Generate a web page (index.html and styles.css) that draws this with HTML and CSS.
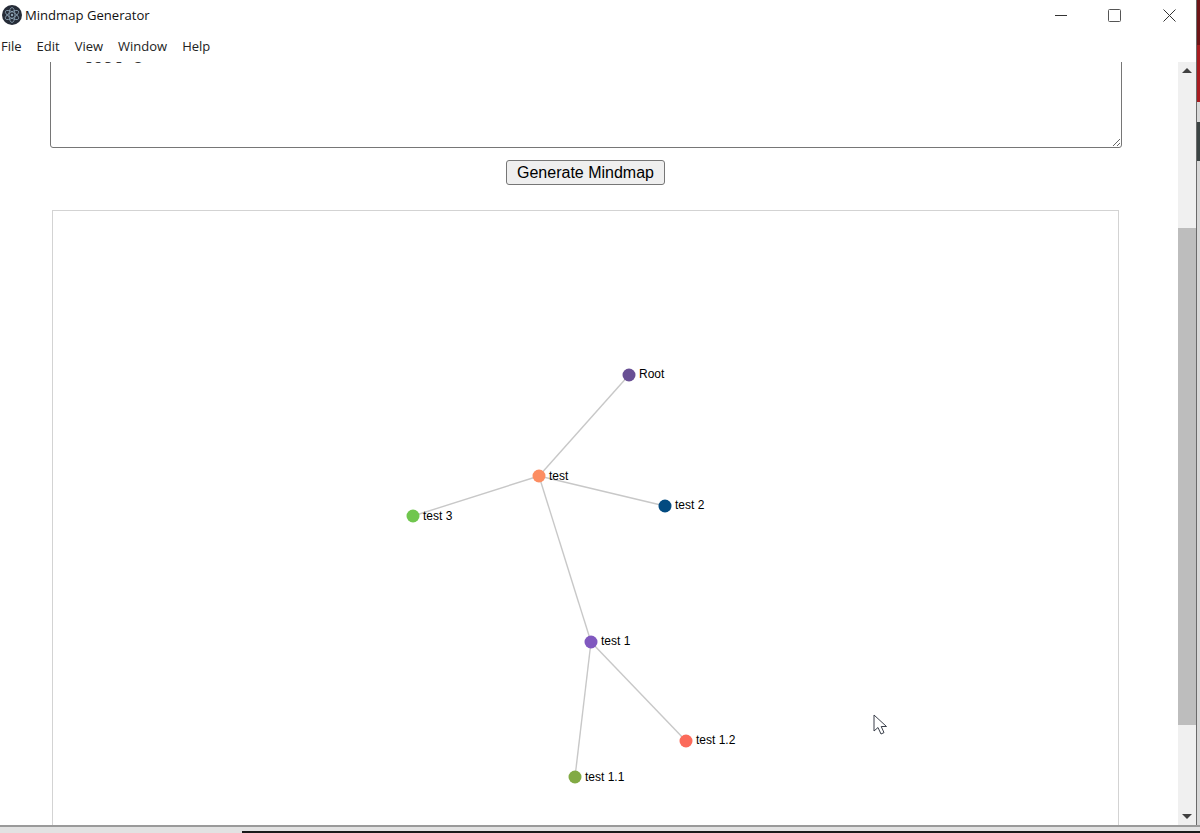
FILE: index.html
```html
<!DOCTYPE html>
<html lang="en">

<head>
  <meta charset="UTF-8">
  <title>Mindmap Generator</title>
  <link rel="stylesheet" href="styles.css">
</head>

<body>
  <div class="desktop">
    <div class="window">
      <div class="titlebar">
        <svg class="app-icon" viewBox="0 0 20 20" width="20" height="20">
          <circle cx="10" cy="10" r="10" fill="#262c38" />
          <g fill="none" stroke="#8fa6b8" stroke-width="0.8">
            <ellipse cx="10" cy="10" rx="7.5" ry="3" transform="rotate(30 10 10)" />
            <ellipse cx="10" cy="10" rx="7.5" ry="3" transform="rotate(90 10 10)" />
            <ellipse cx="10" cy="10" rx="7.5" ry="3" transform="rotate(150 10 10)" />
          </g>
          <circle cx="10" cy="10" r="1.2" fill="#8fa6b8" />
        </svg>
        <span class="app-title">Mindmap Generator</span>
        <div class="win-controls">
          <svg class="win-btn min" viewBox="0 0 12 12" width="12" height="12">
            <path d="M0 6.5H12" stroke="#333" fill="none" />
          </svg>
          <svg class="win-btn max" viewBox="0 0 13 13" width="13" height="13">
            <rect x="0.5" y="0.5" width="12" height="12" rx="1" stroke="#555" fill="none" />
          </svg>
          <svg class="win-btn" viewBox="0 0 13 13" width="13" height="13">
            <path d="M0.5 0.5L12.5 12.5M12.5 0.5L0.5 12.5" stroke="#333" fill="none" />
          </svg>
        </div>
      </div>

      <div class="menubar">
        <span>File</span>
        <span>Edit</span>
        <span>View</span>
        <span>Window</span>
        <span>Help</span>
      </div>

      <div class="content">
        <div class="page">
          <textarea class="source" spellcheck="false">   test 3</textarea>
          <button class="generate">Generate Mindmap</button>
          <div class="map">
            <svg class="map-svg" width="1065" height="640" viewBox="53 211 1065 640">
              <g class="links">
                <line x1="629" y1="375" x2="539" y2="476" />
                <line x1="539" y1="476" x2="665" y2="506" />
                <line x1="539" y1="476" x2="413" y2="516" />
                <line x1="539" y1="476" x2="591" y2="642" />
                <line x1="591" y1="642" x2="575" y2="777" />
                <line x1="591" y1="642" x2="686" y2="741" />
              </g>
              <g class="nodes">
                <circle cx="629" cy="375" r="6.5" fill="#684f94" />
                <text x="639" y="378">Root</text>
                <circle cx="539" cy="476" r="6.5" fill="#fc8d62" />
                <text x="549" y="480">test</text>
                <circle cx="665" cy="506" r="6.5" fill="#024a80" />
                <text x="675" y="509">test 2</text>
                <circle cx="413" cy="516" r="6.5" fill="#70c64e" />
                <text x="423" y="520">test 3</text>
                <circle cx="591" cy="642" r="6.5" fill="#8058bf" />
                <text x="601" y="645">test 1</text>
                <circle cx="686" cy="741" r="6.5" fill="#fb6a5a" />
                <text x="696" y="744">test 1.2</text>
                <circle cx="575" cy="777" r="6.5" fill="#82aa44" />
                <text x="585" y="781">test 1.1</text>
              </g>
            </svg>
          </div>
        </div>

        <div class="scrollbar">
          <div class="arrow up"></div>
          <div class="track">
            <div class="thumb"></div>
          </div>
          <div class="arrow down"></div>
        </div>

        <!-- mouse pointer caught in the screenshot -->
        <svg class="cursor" viewBox="0 0 16 22" width="16" height="22">
          <path d="M1 1V17L5 13.5L8 20L11 18.6L8.2 12.5H13.5Z" fill="#fff" stroke="#3a3f4a" />
        </svg>
      </div>
    </div>

    <div class="wallpaper"></div>
  </div>

  <div class="taskbar-edge">
    <div class="taskbar-dark"></div>
  </div>
</body>

</html>
```

FILE: styles.css
```css
* {
  box-sizing: border-box;
}

html,
body {
  margin: 0;
  height: 100%;
  overflow: hidden;
}

body {
  display: flex;
  flex-direction: column;
  font-family: "Open Sans", "Noto Sans", sans-serif;
  background: #fff;
}

.desktop {
  display: flex;
  height: 825px;
}

.window {
  flex: 1;
  display: flex;
  flex-direction: column;
  min-width: 0;
  background: #fff;
}

.wallpaper {
  width: 4px;
  background: linear-gradient(#6e1416 0, #6e1416 45px, #a81c20 45px, #a81c20 102px, #d8d8d8 102px, #d8d8d8 122px, #3c4444 122px, #3c4444 161px, #d8d8d8 161px);
  border-left: 1px solid #6a6a6a;
}

.titlebar {
  display: flex;
  align-items: center;
  height: 31px;
  padding: 0 0 1px 2px;
  flex-shrink: 0;
}

.app-title {
  margin-left: 3px;
  font-size: 13.1px;
  color: #111;
}

.win-controls {
  margin-left: auto;
  display: flex;
  align-items: center;
  padding-right: 20px;
}

.win-btn {
  display: block;
}

.win-btn.min {
  margin-right: 41px;
}

.win-btn.max {
  margin-right: 42px;
}

.menubar {
  display: flex;
  align-items: center;
  gap: 15px;
  height: 31px;
  padding: 0 0 2px 1px;
  font-size: 13px;
  color: #222;
  flex-shrink: 0;
}

.content {
  position: relative;
  flex: 1;
  display: flex;
  min-height: 0;
  overflow: hidden;
}

.page {
  flex: 1;
  min-width: 0;
  display: flex;
  flex-direction: column;
  align-items: center;
  padding: 0 57px 0 50px;
}

.source {
  display: block;
  align-self: flex-start;
  width: 1072px;
  height: 134px;
  margin-top: -48px;
  flex-shrink: 0;
  padding: 34px 2px 2px;
  border: 1px solid #767676;
  border-radius: 3px;
  font-family: "Liberation Mono", monospace;
  font-size: 16.67px;
  line-height: 20px;
  color: #333;
  background: #fff;
}

.generate {
  margin-top: 12px;
  width: 159px;
  height: 25px;
  flex-shrink: 0;
  padding: 0;
  border: 1px solid #767676;
  border-radius: 3px;
  background: #efefef;
  font-family: "Liberation Sans", sans-serif;
  font-size: 16px;
  color: #000;
}

.map {
  width: 1067px;
  height: 640px;
  margin-top: 25px;
  flex-shrink: 0;
  border: 1px solid #d3d3d3;
}

.map-svg {
  display: block;
}

.links line {
  stroke: #c8c8c8;
  stroke-width: 1.4;
}

.nodes text {
  font-family: "Liberation Sans", sans-serif;
  font-size: 12px;
  fill: #000;
}

.scrollbar {
  width: 18px;
  display: flex;
  flex-direction: column;
  background: #f0f0f0;
  flex-shrink: 0;
}

.arrow {
  height: 17px;
  flex-shrink: 0;
  display: flex;
  align-items: center;
  justify-content: center;
}

.arrow::after {
  content: "";
  border-left: 5px solid transparent;
  border-right: 5px solid transparent;
}

.arrow.up::after {
  border-bottom: 5px solid #404040;
}

.arrow.down::after {
  border-top: 5px solid #404040;
}

.track {
  flex: 1;
}

.thumb {
  height: 497px;
  margin-top: 149px;
  background: #bdbdbd;
}

.cursor {
  position: absolute;
  left: 873px;
  top: 652px;
}

.taskbar-edge {
  flex: 1;
  border-top: 2px solid #9a9a9a;
  background: #e2e2e2;
  display: flex;
  align-items: flex-end;
  padding-left: 242px;
}

.taskbar-dark {
  width: 100%;
  height: 2px;
  background: #1a1a1a;
}
```
